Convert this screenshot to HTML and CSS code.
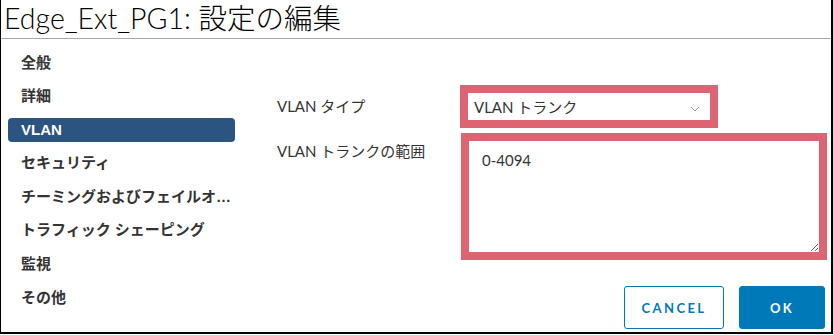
FILE: index.html
```html
<!DOCTYPE html>
<html lang="ja">
<head>
<meta charset="utf-8">
<title>Edge_Ext_PG1: 設定の編集</title>
<link rel="stylesheet" href="styles.css">
</head>
<body>
<div class="frame">
  <div class="header">Edge_Ext_PG1: 設定の編集</div>
  <div class="body">
    <nav class="sidebar">
      <div class="nav-item">全般</div>
      <div class="nav-item">詳細</div>
      <div class="nav-item active">VLAN</div>
      <div class="nav-item">セキュリティ</div>
      <div class="nav-item">チーミングおよびフェイルオーバー</div>
      <div class="nav-item">トラフィック シェーピング</div>
      <div class="nav-item">監視</div>
      <div class="nav-item">その他</div>
    </nav>
    <div class="content">
      <div class="form">
        <div class="label label-select">VLAN タイプ</div>
        <div class="select">
          <span class="select-text">VLAN トランク</span>
          <svg class="chevron" width="10" height="6" viewBox="0 0 10 6"><path d="M1 1 L5 5 L9 1" fill="none" stroke="#9a9a9a" stroke-width="1"/></svg>
        </div>
        <div class="label label-area">VLAN トランクの範囲</div>
        <textarea class="area">0-4094</textarea>
      </div>
      <div class="footer">
        <button class="btn btn-outline">CANCEL</button>
        <button class="btn btn-primary">OK</button>
      </div>
    </div>
  </div>
</div>
</body>
</html>
```
FILE: styles.css
```css
html, body {
  margin: 0;
  padding: 0;
  background: #fff;
}
.frame {
  width: 833px;
  height: 334px;
  box-sizing: border-box;
  border-left: 1px solid #000;
  border-right: 2px solid #000;
  border-bottom: 2px solid #000;
  display: flex;
  flex-direction: column;
  font-family: Lato, "Noto Sans CJK JP", sans-serif;
  color: #333;
}
.header {
  height: 39px;
  box-sizing: border-box;
  border-bottom: 1px solid #a8a8a8;
  padding-left: 3px;
  font-size: 28.5px;
  font-weight: 300;
  line-height: 36px;
  color: #000;
  white-space: nowrap;
}
.body {
  flex: 1;
  display: flex;
}
.sidebar {
  width: 245px;
  box-sizing: border-box;
  padding: 11.5px 0 0 7px;
  display: flex;
  flex-direction: column;
  gap: 9.6px;
}
.nav-item {
  width: 227px;
  height: 24px;
  box-sizing: border-box;
  padding: 0 0 0 13px;
  border-radius: 4px;
  font-family: "Liberation Sans", "Noto Sans CJK JP", sans-serif;
  font-weight: bold;
  font-size: 15px;
  line-height: 24px;
  color: #333;
  white-space: nowrap;
  overflow: hidden;
  text-overflow: ellipsis;
}
.nav-item.active {
  background: #2b5580;
  color: #fff;
}
.content {
  flex: 1;
  padding: 46px 4px 0 31px;
  display: flex;
  flex-direction: column;
}
.form {
  display: grid;
  grid-template-columns: 183px 1fr;
  row-gap: 5px;
  align-items: start;
}
.label {
  font-size: 15px;
  color: #333;
  white-space: nowrap;
}
.label-select {
  line-height: 43px;
}
.label-area {
  padding-top: 8px;
  line-height: 21px;
}
.select {
  width: 258px;
  height: 43px;
  box-sizing: border-box;
  border: 8px solid #dc6473;
  display: flex;
  align-items: center;
  justify-content: space-between;
  padding: 0 10px 0 6px;
  font-size: 15px;
  color: #333;
}
.chevron {
  margin-top: 4px;
}
.area {
  margin: 0 0 0 1px;
  width: 366px;
  height: 127px;
  box-sizing: border-box;
  border: 8px solid #dc6473;
  padding: 10px 13px;
  font-family: Lato, "Noto Sans CJK JP", sans-serif;
  font-size: 15px;
  color: #333;
  outline: none;
  resize: both;
}
.footer {
  display: flex;
  justify-content: flex-end;
  gap: 15px;
  padding: 26px 2px 0 0;
}
.btn {
  height: 43px;
  box-sizing: border-box;
  border-radius: 3px;
  font-family: Lato, sans-serif;
  font-weight: bold;
  font-size: 13px;
  letter-spacing: 2.4px;
  cursor: pointer;
  padding: 0;
}
.btn-outline {
  width: 100px;
  border: 1px solid #0079b8;
  background: #fff;
  color: #0079b8;
}
.btn-primary {
  width: 86px;
  border: 1px solid #0079b8;
  background: #0079b8;
  color: #fff;
}
```
